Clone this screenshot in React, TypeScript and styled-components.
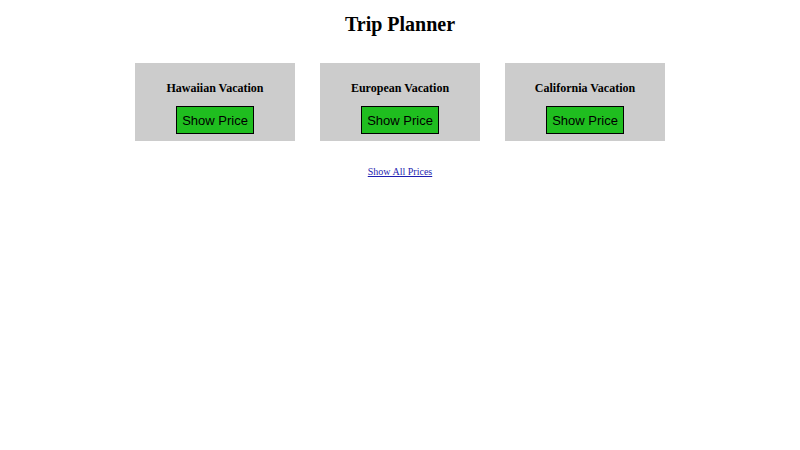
import styled, { createGlobalStyle } from "styled-components";

const GlobalStyle = createGlobalStyle`
  html, body {
    margin: 0;
    padding: 0;
    background: #ffffff;
  }
  body {
    font-family: "Liberation Serif", "Times New Roman", serif;
    color: #000000;
  }
`;

const Page = styled.div`
  display: flex;
  flex-direction: column;
  align-items: center;
  padding-top: 13px;
`;

const Title = styled.h1`
  margin: 0;
  font-size: 20px;
  line-height: 23px;
  font-weight: bold;
`;

const TripList = styled.div`
  display: flex;
  gap: 25px;
  margin-top: 27px;
`;

const Trip = styled.div`
  width: 160px;
  height: 78px;
  box-sizing: border-box;
  background-color: #cccccc;
  display: flex;
  flex-direction: column;
  align-items: center;
  padding-top: 18px;
`;

const TripName = styled.h3`
  margin: 0;
  font-size: 12px;
  line-height: 15px;
  font-weight: bold;
`;

const PriceButton = styled.button`
  margin-top: 10px;
  width: 78px;
  height: 28px;
  box-sizing: border-box;
  background-color: #1fbe1f;
  border: 1px solid #000000;
  border-radius: 0;
  font-family: "Liberation Sans", Arial, sans-serif;
  font-size: 13px;
  color: #000000;
  padding: 0;
`;

const AllPrices = styled.a`
  margin-top: 25px;
  font-size: 10px;
  color: #1e1eb0;
  text-decoration: underline;
`;

const trips = ["Hawaiian Vacation", "European Vacation", "California Vacation"];

function App() {
  return (
    <>
      <GlobalStyle />
      <Page>
        <Title>Trip Planner</Title>
        <TripList>
          {trips.map((name) => (
            <Trip key={name}>
              <TripName>{name}</TripName>
              <PriceButton>Show Price</PriceButton>
            </Trip>
          ))}
        </TripList>
        <AllPrices href="#">Show All Prices</AllPrices>
      </Page>
    </>
  );
}

export default App;
